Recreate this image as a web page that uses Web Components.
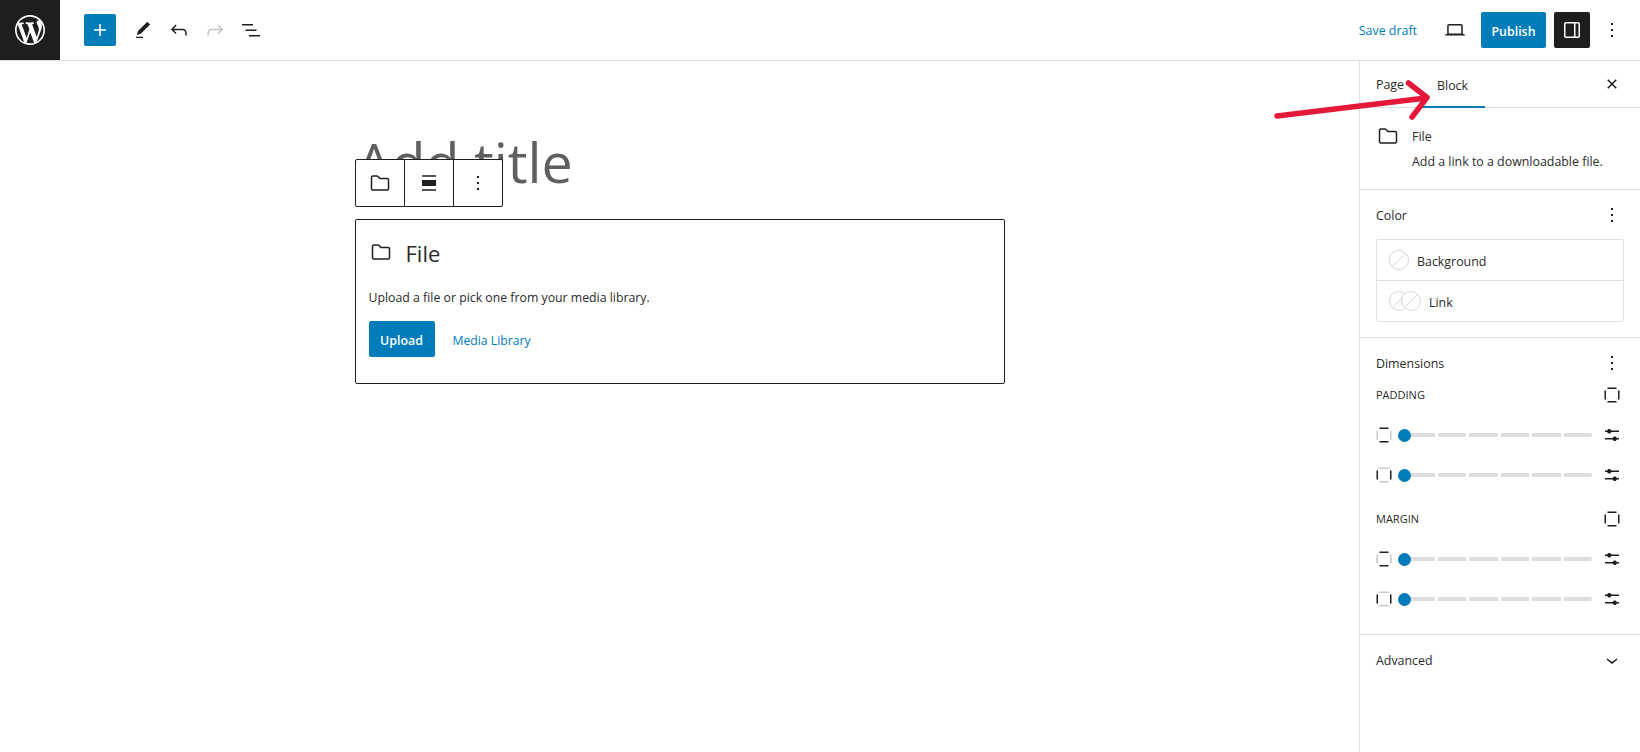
<!DOCTYPE html>
<html lang="en">
<head>
<meta charset="utf-8">
<title>Add title</title>
<style>
    html, body { margin: 0; height: 100%; }
    body {
        font-family: "Open Sans", "Noto Sans", sans-serif;
        font-size: 12.4px;
        color: #2a2a2a;
        background: #fff;
        overflow: hidden;
    }
    wp-editor { height: 752px; }
</style>
</head>
<body>
<wp-editor>
    <wp-topbar slot="top"></wp-topbar>
    <wp-canvas slot="canvas" title-text="Add title"></wp-canvas>
    <wp-sidebar slot="side"></wp-sidebar>
    <wp-arrow slot="overlay"></wp-arrow>
</wp-editor>

<script>
const ICONS = {
    plus: '<path d="M18 11.2h-5.2V6h-1.6v5.2H6v1.6h5.2V18h1.6v-5.2H18z"/>',
    edit: '<path transform="translate(1.6 2) scale(.87)" d="M20.1 5.1L16.9 2 6.2 12.7l-1.3 4.4 4.5-1.3L20.1 5.1zM4 20.8h8v-1.5H4v1.5z"/>',
    undo: '<path d="M18.3 11.7c-.6-.6-1.4-.9-2.3-.9H6.7l2.9-3.3-1.1-1-4.5 5L8.5 16l1-1-2.7-2.7H16c.5 0 .9.2 1.3.5 1 1 1 3.4 1 4.5v.3h1.5v-.2c0-1.5 0-4.3-1.5-5.7z"/>',
    redo: '<path d="M15.6 6.5l-1.1 1 2.9 3.3H8c-.9 0-1.7.3-2.3.9-1.4 1.5-1.4 4.2-1.4 5.6v.2h1.5v-.3c0-1.1 0-3.5 1-4.5.3-.3.7-.5 1.3-.5h9.2L14.5 15l1.1 1.1 4.6-4.6-4.6-5z"/>',
    list: '<path d="M3 6h11v1.5H3V6zm3.5 5.5h11V13h-11v-1.5zM10 17h11v1.5H10V17z"/>',
    laptop: '<path d="M20.5 16h-.7V8c0-1.1-.9-2-2-2H6.2c-1.1 0-2 .9-2 2v8h-.7c-.8 0-1.5.7-1.5 1.500h20c0-.8-.7-1.500-1.500-1.500zM5.700 8c0-.3.2-.5.5-.5h11.600c.3 0 .5.2.5.5v7.600H5.700V8z"/>',
    sidebar: '<path d="M18 4H6c-1.1 0-2 .9-2 2v12c0 1.1.9 2 2 2h12c1.1 0 2-.9 2-2V6c0-1.1-.9-2-2-2zm-4 14.5H6c-.3 0-.5-.2-.5-.5V6c0-.3.2-.5.5-.5h8v13zm4.5-.5c0 .3-.2.5-.5.5h-2.500v-13H18c.3 0 .5.2.5.5v12z"/>',
    more: '<path d="M13 19h-2v-2h2v2zm0-6h-2v-2h2v2zm0-6h-2V5h2v2z"/>',
    close: '<path d="M12 13.06l3.712 3.713 1.061-1.06L13.061 12l3.712-3.712-1.06-1.06L12 10.938 8.288 7.227l-1.061 1.06L10.939 12l-3.712 3.712 1.06 1.061L12 13.061z"/>',
    folder: '<path fill="none" stroke="currentColor" stroke-width="1.5" d="M4.800 4.900h4.100c.3 0 .6.1.8.3L11.900 7.500h7.300c.7 0 1.300.6 1.300 1.300v8.900c0 .7-.6 1.300-1.300 1.300H4.800c-.7 0-1.300-.6-1.300-1.300V6.200c0-.7.6-1.300 1.300-1.300z"/>',
    alignNone: '<path d="M5 15h14V9H5v6zm0 4.800h14v-1.500H5v1.500zM5 4.200v1.500h14V4.200H5z"/>',
    sidesAll: '<path d="M7.500 6h9V4.500h-9zm0 13.500h9V18h-9zm-3-3H6v-9H4.500zM18 7.500v9h1.500v-9z"/>',
    sidesVertical: '<path d="M7.500 6h9V4.500h-9zm0 13.500h9V18h-9z"/><path opacity=".25" d="M4.500 16.500H6v-9H4.500zM18 7.500v9h1.500v-9z"/>',
    sidesHorizontal: '<path opacity=".25" d="M7.500 6h9V4.500h-9zm0 13.500h9V18h-9z"/><path d="M4.500 16.500H6v-9H4.500zM18 7.500v9h1.500v-9z"/>',
    settings: '<path d="M19 7.500h-7.628c-.3089-.87389-1.1423-1.500-2.122-1.500-.97966 0-1.81309.62611-2.12197 1.500H5V9h2.12803c.30888.87389 1.14231 1.500 2.12197 1.500.9797 0 1.8131-.62611 2.122-1.500H19z"/><path d="M19 15h-2.128c-.3089-.8739-1.1423-1.500-2.122-1.500s-1.8131.6261-2.122 1.500H5v1.500h7.628c.3089.8739 1.1423 1.500 2.122 1.500s1.8131-.6261 2.122-1.500H19z"/>',
    chevron: '<path d="M17.500 11.600L12 16l-5.500-4.400.9-1.200L12 14l4.600-3.600.9 1.200z"/>'
};

const WP_LOGO = 'M20 10c0-5.52-4.48-10-10-10S0 4.48 0 10s4.48 10 10 10 10-4.48 10-10zM7.78 15.37L4.37 6.22c.55-.02 1.17-.08 1.17-.08.5-.06.44-1.13-.06-1.11 0 0-1.45.11-2.37.11-.18 0-.37 0-.58-.01C4.12 2.69 6.87 1.11 10 1.11c2.33 0 4.45.87 6.05 2.34-.68-.11-1.65.39-1.65 1.58 0 .74.45 1.36.9 2.1.35.61.55 1.36.55 2.46 0 1.49-1.4 5-1.4 5l-3.03-8.37c.54-.02.82-.17.82-.17.5-.05.44-1.25-.06-1.22 0 0-1.44.12-2.38.12-.87 0-2.33-.12-2.33-.12-.5-.03-.56 1.2-.06 1.22l.92.08 1.26 3.41zM17.41 10c.24-.64.74-1.87.43-4.25.7 1.29 1.05 2.71 1.05 4.25 0 3.29-1.73 6.24-4.4 7.78.97-2.59 1.94-5.2 2.92-7.78zM6.1 18.09C3.12 16.65 1.11 13.53 1.11 10c0-1.3.23-2.48.72-3.59C3.25 10.3 4.67 14.2 6.1 18.09zm4.03-6.63l2.58 6.98c-.86.29-1.76.45-2.71.45-.79 0-1.57-.11-2.29-.33.81-2.38 1.62-4.74 2.42-7.1z';

class WpIcon extends HTMLElement {
    connectedCallback() {
        const name = this.getAttribute('name');
        this.attachShadow({ mode: 'open' }).innerHTML = `
            <style>
                :host { display: block; width: 24px; height: 24px; flex: none; color: #1e1e1e; }
                :host(.off) { color: #c4c4c4; }
                :host(.light) { color: #fff; }
                svg { display: block; fill: currentColor; }
            </style>
            <svg width="24" height="24" viewBox="0 0 24 24">${ICONS[name]}</svg>
        `;
    }
}

class WpTopbar extends HTMLElement {
    connectedCallback() {
        this.attachShadow({ mode: 'open' }).innerHTML = `
            <style>
                :host {
                    display: flex;
                    align-items: center;
                    height: 60px;
                    border-bottom: 1px solid #e0e0e0;
                    background: #fff;
                }
                .logo {
                    width: 60px;
                    height: 60px;
                    background: #1e1e1e;
                    display: flex;
                    align-items: center;
                    justify-content: center;
                }
                .logo svg { fill: #fff; display: block; }
                .tools { display: flex; align-items: center; gap: 12px; margin-left: 24px; }
                .inserter {
                    width: 32px;
                    height: 32px;
                    background: #007cba;
                    border-radius: 2px;
                    display: flex;
                    align-items: center;
                    justify-content: center;
                    margin-right: 3px;
                }
                .actions { margin-left: auto; margin-right: 16px; display: flex; align-items: center; }
                .save { color: #007cba; margin-right: 26px; padding-top: 1px; }
                .publish {
                    box-sizing: border-box;
                    height: 36px;
                    width: 65px;
                    padding-top: 2px;
                    margin-left: 14px;
                    background: #007cba;
                    color: #fff;
                    border-radius: 2px;
                    font-weight: 600;
                    display: flex;
                    align-items: center;
                    justify-content: center;
                }
                .toggle {
                    width: 36px;
                    height: 36px;
                    margin: 0 10px 0 8px;
                    background: #1e1e1e;
                    border-radius: 2px;
                    display: flex;
                    align-items: center;
                    justify-content: center;
                }
            </style>
            <div class="logo">
                <svg width="30" height="30" viewBox="0 0 20 20"><path d="${WP_LOGO}"/></svg>
            </div>
            <div class="tools">
                <div class="inserter"><wp-icon name="plus" class="light"></wp-icon></div>
                <wp-icon name="edit"></wp-icon>
                <wp-icon name="undo"></wp-icon>
                <wp-icon name="redo" class="off"></wp-icon>
                <wp-icon name="list"></wp-icon>
            </div>
            <div class="actions">
                <span class="save">Save draft</span>
                <wp-icon name="laptop"></wp-icon>
                <div class="publish">Publish</div>
                <div class="toggle"><wp-icon name="sidebar" class="light"></wp-icon></div>
                <wp-icon name="more"></wp-icon>
            </div>
        `;
    }
}

class WpFilePlaceholder extends HTMLElement {
    connectedCallback() {
        this.attachShadow({ mode: 'open' }).innerHTML = `
            <style>
                :host {
                    display: block;
                    position: relative;
                    box-sizing: border-box;
                    width: 650px;
                    height: 165px;
                    padding: 20px 13px 0;
                    border: 1px solid #1e1e1e;
                    border-radius: 2px;
                    background: #fff;
                }
                .label { display: flex; align-items: center; height: 24px; }
                .label span { font-size: 22px; margin-left: 13px; padding-top: 2px; }
                .hint { margin-top: 24px; line-height: 20px; font-size: 12.3px; }
                .row { display: flex; align-items: center; margin-top: 13px; }
                .upload {
                    box-sizing: border-box;
                    width: 66px;
                    height: 36px;
                    padding-top: 2px;
                    background: #007cba;
                    color: #fff;
                    border-radius: 2px;
                    font-weight: 600;
                    display: flex;
                    align-items: center;
                    justify-content: center;
                }
                .media { color: #007cba; margin-left: 18px; font-size: 12.2px; padding-top: 2px; }
                .toolbar {
                    position: absolute;
                    left: -1px;
                    top: -61px;
                    display: flex;
                    height: 46px;
                    border: 1px solid #1e1e1e;
                    border-radius: 2px;
                    background: #fff;
                }
                .toolbar div {
                    width: 48px;
                    display: flex;
                    align-items: center;
                    justify-content: center;
                    border-left: 1px solid #1e1e1e;
                }
                .toolbar div:first-child { border-left: 0; }
            </style>
            <div class="toolbar">
                <div><wp-icon name="folder"></wp-icon></div>
                <div><wp-icon name="alignNone"></wp-icon></div>
                <div><wp-icon name="more"></wp-icon></div>
            </div>
            <div class="label"><wp-icon name="folder"></wp-icon><span>File</span></div>
            <div class="hint">Upload a file or pick one from your media library.</div>
            <div class="row">
                <div class="upload">Upload</div>
                <span class="media">Media Library</span>
            </div>
        `;
    }
}

class WpCanvas extends HTMLElement {
    connectedCallback() {
        const title = this.getAttribute('title-text');
        this.attachShadow({ mode: 'open' }).innerHTML = `
            <style>
                :host { display: block; flex: 1; min-width: 0; background: #fff; }
                .inner { width: 650px; margin: 0 auto; padding-top: 60px; }
                h1 {
                    margin: 0 0 0 2px;
                    height: 98px;
                    font-size: 55.5px;
                    line-height: 82px;
                    font-weight: 400;
                    color: #5f5f5f;
                }
            </style>
            <div class="inner">
                <h1>${title}</h1>
                <wp-file-placeholder></wp-file-placeholder>
            </div>
        `;
    }
}

class WpPanel extends HTMLElement {
    connectedCallback() {
        const heading = this.getAttribute('heading');
        const icon = this.getAttribute('action') || 'more';
        this.attachShadow({ mode: 'open' }).innerHTML = `
            <style>
                :host {
                    display: block;
                    padding: 16px;
                    border-bottom: 1px solid #e0e0e0;
                }
                .head {
                    display: flex;
                    align-items: center;
                    justify-content: space-between;
                    height: 18px;
                }
                .body { display: block; }
            </style>
            <div class="head"><span>${heading}</span><wp-icon name="${icon}"></wp-icon></div>
            <div class="body"><slot></slot></div>
        `;
    }
}

class WpColorRow extends HTMLElement {
    connectedCallback() {
        const double = this.hasAttribute('double');
        this.attachShadow({ mode: 'open' }).innerHTML = `
            <style>
                :host {
                    display: flex;
                    align-items: center;
                    height: 40px;
                    padding-left: 12px;
                    gap: 8px;
                }
                .swatches { display: flex; }
                .text { padding-top: 2px; }
                i {
                    display: block;
                    box-sizing: border-box;
                    width: 20px;
                    height: 20px;
                    border-radius: 50%;
                    border: 1px solid #d6d6d6;
                    background: linear-gradient(-45deg, #fff 48%, #d6d6d6 48%, #d6d6d6 52%, #fff 52%);
                }
                i + i { margin-left: -8px; }
            </style>
            <div class="swatches"><i></i>${double ? '<i></i>' : ''}</div>
            <span class="text"><slot></slot></span>
        `;
    }
}

class WpSpacingRow extends HTMLElement {
    connectedCallback() {
        const sides = this.getAttribute('sides');
        this.attachShadow({ mode: 'open' }).innerHTML = `
            <style>
                :host { display: flex; align-items: center; height: 40px; margin-left: -4px; }
                .slider { position: relative; margin: 0 8px 0 2px; width: 194px; height: 13px; }
                .track {
                    position: absolute;
                    left: 6px;
                    right: 0;
                    top: 4px;
                    height: 4px;
                    display: flex;
                    gap: 3px;
                }
                .track i { display: block; background: #ddd; flex: 1; }
                .track i:first-child { flex: 0 0 31px; }
                .track i:last-child { border-radius: 0 2px 2px 0; }
                .thumb {
                    position: absolute;
                    left: 0;
                    top: 0;
                    width: 13px;
                    height: 13px;
                    border-radius: 50%;
                    background: #007cba;
                }
            </style>
            <wp-icon name="${sides}"></wp-icon>
            <div class="slider">
                <div class="track"><i></i><i></i><i></i><i></i><i></i><i></i></div>
                <div class="thumb"></div>
            </div>
            <wp-icon name="settings"></wp-icon>
        `;
    }
}

class WpSpacingGroup extends HTMLElement {
    connectedCallback() {
        const label = this.getAttribute('label');
        this.attachShadow({ mode: 'open' }).innerHTML = `
            <style>
                :host { display: block; }
                .label {
                    display: flex;
                    align-items: center;
                    justify-content: space-between;
                    height: 24px;
                    margin-bottom: 8px;
                    font-size: 11px;
                }
                .label span { padding-bottom: 1px; }
            </style>
            <div class="label"><span>${label}</span><wp-icon name="sidesAll"></wp-icon></div>
            <wp-spacing-row sides="sidesVertical"></wp-spacing-row>
            <wp-spacing-row sides="sidesHorizontal"></wp-spacing-row>
        `;
    }
}

class WpSidebar extends HTMLElement {
    connectedCallback() {
        this.attachShadow({ mode: 'open' }).innerHTML = `
            <style>
                :host {
                    display: block;
                    width: 280px;
                    flex: none;
                    border-left: 1px solid #e0e0e0;
                    background: #fff;
                }
                .tabs {
                    display: flex;
                    align-items: center;
                    height: 46px;
                    border-bottom: 1px solid #e0e0e0;
                }
                .tab { width: 61px; padding: 1px 0 0 16px; box-sizing: border-box; }
                .tab.on {
                    width: 64px;
                    height: 46px;
                    line-height: 46px;
                    box-shadow: inset 0 -2px 0 #007cba;
                    margin-bottom: -1px;
                }
                .tabs wp-icon { margin-left: auto; margin-right: 16px; }
                .info { display: flex; padding: 16px 16px 18px; border-bottom: 1px solid #e0e0e0; gap: 12px; }
                .info b { display: block; font-weight: 400; line-height: 26px; }
                .info p { margin: 3px 0 0; line-height: 18px; }
                .colors {
                    margin-top: 15px;
                    border: 1px solid #e0e0e0;
                    border-radius: 2px;
                }
                .colors wp-color-row + wp-color-row { border-top: 1px solid #e0e0e0; }
                .color-panel { padding-bottom: 15px; }
                .gap { height: 11px; }
                .gap2 { height: 12px; }
                .dim { padding-bottom: 15px; }
                .last { border-bottom: 0; }
            </style>
            <div class="tabs">
                <div class="tab">Page</div>
                <div class="tab on">Block</div>
                <wp-icon name="close"></wp-icon>
            </div>
            <div class="info">
                <wp-icon name="folder"></wp-icon>
                <div><b>File</b><p>Add a link to a downloadable file.</p></div>
            </div>
            <wp-panel heading="Color" class="color-panel">
                <div class="colors">
                    <wp-color-row>Background</wp-color-row>
                    <wp-color-row double>Link</wp-color-row>
                </div>
            </wp-panel>
            <wp-panel heading="Dimensions" class="dim">
                <div class="gap"></div>
                <wp-spacing-group label="PADDING"></wp-spacing-group>
                <div class="gap2"></div>
                <wp-spacing-group label="MARGIN"></wp-spacing-group>
            </wp-panel>
            <wp-panel heading="Advanced" action="chevron" class="last"></wp-panel>
        `;
    }
}

// annotation drawn over the screenshot, free canvas coords
class WpArrow extends HTMLElement {
    connectedCallback() {
        this.attachShadow({ mode: 'open' }).innerHTML = `
            <style>
                :host { display: block; position: absolute; left: 0; top: 0; pointer-events: none; }
                svg { display: block; }
            </style>
            <svg width="1640" height="752" fill="none" stroke="#e4193a" stroke-width="5.5" stroke-linecap="round" stroke-linejoin="round">
                <path d="M1277 116L1426 98M1408.500 83L1427 97.500L1412 117"/>
            </svg>
        `;
    }
}

class WpEditor extends HTMLElement {
    constructor() {
        super();
        this.attachShadow({ mode: 'open' }).innerHTML = `
            <style>
                :host { display: flex; flex-direction: column; position: relative; overflow: hidden; }
                .main { display: flex; flex: 1; min-height: 0; }
            </style>
            <slot name="top"></slot>
            <div class="main"><slot name="canvas"></slot><slot name="side"></slot></div>
            <slot name="overlay"></slot>
        `;
    }
}

customElements.define('wp-icon', WpIcon);
customElements.define('wp-topbar', WpTopbar);
customElements.define('wp-file-placeholder', WpFilePlaceholder);
customElements.define('wp-canvas', WpCanvas);
customElements.define('wp-panel', WpPanel);
customElements.define('wp-color-row', WpColorRow);
customElements.define('wp-spacing-row', WpSpacingRow);
customElements.define('wp-spacing-group', WpSpacingGroup);
customElements.define('wp-sidebar', WpSidebar);
customElements.define('wp-arrow', WpArrow);
customElements.define('wp-editor', WpEditor);
</script>
</body>
</html>
